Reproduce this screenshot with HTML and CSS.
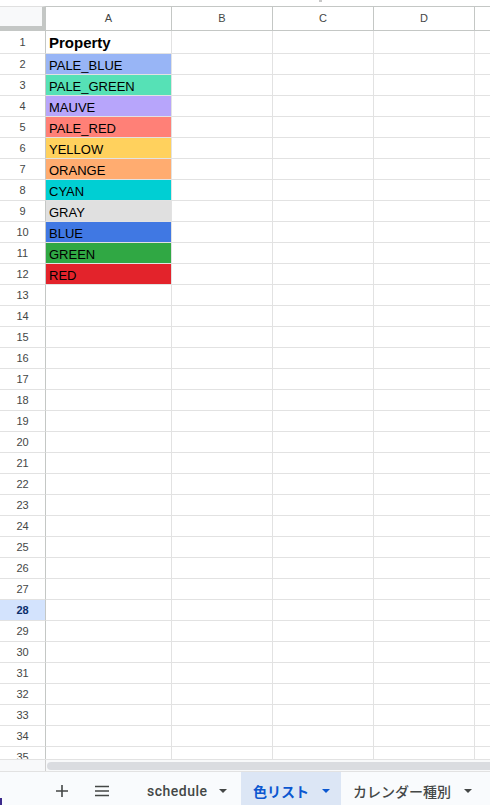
FILE: index.html
```html
<!DOCTYPE html>
<html lang="ja">
<head>
<meta charset="utf-8">
<title>色リスト</title>
<link rel="stylesheet" href="styles.css">
</head>
<body>
<div class="sheet">
  <div class="topstrip"><span class="speck"></span></div>
  <div class="grid">
    <div class="row head">
      <div class="corner"></div>
      <div class="ch ca">A</div><div class="ch">B</div><div class="ch">C</div><div class="ch">D</div><div class="ch"></div>
    </div>
    <div class="row r1"><div class="rh">1</div><div class="c ca prop">Property</div><div class="c"></div><div class="c"></div><div class="c"></div><div class="c"></div></div>
    <div class="row"><div class="rh">2</div><div class="c ca pale-blue">PALE_BLUE</div><div class="c"></div><div class="c"></div><div class="c"></div><div class="c"></div></div>
    <div class="row"><div class="rh">3</div><div class="c ca pale-green">PALE_GREEN</div><div class="c"></div><div class="c"></div><div class="c"></div><div class="c"></div></div>
    <div class="row"><div class="rh">4</div><div class="c ca mauve">MAUVE</div><div class="c"></div><div class="c"></div><div class="c"></div><div class="c"></div></div>
    <div class="row"><div class="rh">5</div><div class="c ca pale-red">PALE_RED</div><div class="c"></div><div class="c"></div><div class="c"></div><div class="c"></div></div>
    <div class="row"><div class="rh">6</div><div class="c ca yellow">YELLOW</div><div class="c"></div><div class="c"></div><div class="c"></div><div class="c"></div></div>
    <div class="row"><div class="rh">7</div><div class="c ca orange">ORANGE</div><div class="c"></div><div class="c"></div><div class="c"></div><div class="c"></div></div>
    <div class="row"><div class="rh">8</div><div class="c ca cyan">CYAN</div><div class="c"></div><div class="c"></div><div class="c"></div><div class="c"></div></div>
    <div class="row"><div class="rh">9</div><div class="c ca gray">GRAY</div><div class="c"></div><div class="c"></div><div class="c"></div><div class="c"></div></div>
    <div class="row"><div class="rh">10</div><div class="c ca blue">BLUE</div><div class="c"></div><div class="c"></div><div class="c"></div><div class="c"></div></div>
    <div class="row"><div class="rh">11</div><div class="c ca green">GREEN</div><div class="c"></div><div class="c"></div><div class="c"></div><div class="c"></div></div>
    <div class="row"><div class="rh">12</div><div class="c ca red">RED</div><div class="c"></div><div class="c"></div><div class="c"></div><div class="c"></div></div>
    <div class="row"><div class="rh">13</div><div class="c ca"></div><div class="c"></div><div class="c"></div><div class="c"></div><div class="c"></div></div>
    <div class="row"><div class="rh">14</div><div class="c ca"></div><div class="c"></div><div class="c"></div><div class="c"></div><div class="c"></div></div>
    <div class="row"><div class="rh">15</div><div class="c ca"></div><div class="c"></div><div class="c"></div><div class="c"></div><div class="c"></div></div>
    <div class="row"><div class="rh">16</div><div class="c ca"></div><div class="c"></div><div class="c"></div><div class="c"></div><div class="c"></div></div>
    <div class="row"><div class="rh">17</div><div class="c ca"></div><div class="c"></div><div class="c"></div><div class="c"></div><div class="c"></div></div>
    <div class="row"><div class="rh">18</div><div class="c ca"></div><div class="c"></div><div class="c"></div><div class="c"></div><div class="c"></div></div>
    <div class="row"><div class="rh">19</div><div class="c ca"></div><div class="c"></div><div class="c"></div><div class="c"></div><div class="c"></div></div>
    <div class="row"><div class="rh">20</div><div class="c ca"></div><div class="c"></div><div class="c"></div><div class="c"></div><div class="c"></div></div>
    <div class="row"><div class="rh">21</div><div class="c ca"></div><div class="c"></div><div class="c"></div><div class="c"></div><div class="c"></div></div>
    <div class="row"><div class="rh">22</div><div class="c ca"></div><div class="c"></div><div class="c"></div><div class="c"></div><div class="c"></div></div>
    <div class="row"><div class="rh">23</div><div class="c ca"></div><div class="c"></div><div class="c"></div><div class="c"></div><div class="c"></div></div>
    <div class="row"><div class="rh">24</div><div class="c ca"></div><div class="c"></div><div class="c"></div><div class="c"></div><div class="c"></div></div>
    <div class="row"><div class="rh">25</div><div class="c ca"></div><div class="c"></div><div class="c"></div><div class="c"></div><div class="c"></div></div>
    <div class="row"><div class="rh">26</div><div class="c ca"></div><div class="c"></div><div class="c"></div><div class="c"></div><div class="c"></div></div>
    <div class="row"><div class="rh">27</div><div class="c ca"></div><div class="c"></div><div class="c"></div><div class="c"></div><div class="c"></div></div>
    <div class="row"><div class="rh sel">28</div><div class="c ca"></div><div class="c"></div><div class="c"></div><div class="c"></div><div class="c"></div></div>
    <div class="row"><div class="rh">29</div><div class="c ca"></div><div class="c"></div><div class="c"></div><div class="c"></div><div class="c"></div></div>
    <div class="row"><div class="rh">30</div><div class="c ca"></div><div class="c"></div><div class="c"></div><div class="c"></div><div class="c"></div></div>
    <div class="row"><div class="rh">31</div><div class="c ca"></div><div class="c"></div><div class="c"></div><div class="c"></div><div class="c"></div></div>
    <div class="row"><div class="rh">32</div><div class="c ca"></div><div class="c"></div><div class="c"></div><div class="c"></div><div class="c"></div></div>
    <div class="row"><div class="rh">33</div><div class="c ca"></div><div class="c"></div><div class="c"></div><div class="c"></div><div class="c"></div></div>
    <div class="row"><div class="rh">34</div><div class="c ca"></div><div class="c"></div><div class="c"></div><div class="c"></div><div class="c"></div></div>
    <div class="row"><div class="rh">35</div><div class="c ca"></div><div class="c"></div><div class="c"></div><div class="c"></div><div class="c"></div></div>
  </div>
  <div class="hscroll"><div class="hs-left"></div><div class="hs-track"><div class="thumb"></div></div></div>
  <div class="tabs">
    <span class="edge"></span>
    <div class="tb-btn" title="シートを追加">
      <svg width="14" height="14" viewBox="0 0 14 14"><path d="M7 1v12M1 7h12" stroke="#444746" stroke-width="1.6" fill="none"/></svg>
    </div>
    <div class="tb-btn" title="すべてのシート">
      <svg width="16" height="14" viewBox="0 0 16 14"><path d="M1 2.5h14M1 7h14M1 11.5h14" stroke="#444746" stroke-width="1.5" fill="none"/></svg>
    </div>
    <div class="tab t-schedule"><span class="tab-label">schedule</span><span class="caret"></span></div>
    <div class="tab active"><span class="tab-label">色リスト</span><span class="caret"></span></div>
    <div class="tab"><span class="tab-label">カレンダー種別</span><span class="caret"></span></div>
  </div>
</div>
</body>
</html>
```
FILE: styles.css
```css
html, body {
  margin: 0;
  padding: 0;
  background: #ffffff;
}
body {
  width: 490px;
  height: 805px;
  overflow: hidden;
  font-family: "Liberation Sans", Arial, sans-serif;
}
.sheet {
  display: flex;
  flex-direction: column;
  width: 490px;
  height: 805px;
  overflow: hidden;
}
.topstrip {
  height: 6px;
  flex-shrink: 0;
  display: flex;
  background: #ffffff;
}
.speck {
  width: 3px;
  height: 2px;
  margin-left: 319px;
  background: #c8c8c8;
}
.grid {
  height: 753px;
  flex-shrink: 0;
  overflow: hidden;
}
.row {
  display: flex;
  height: 21px;
  width: 600px;
}
.row.r1 { height: 23px; }
.row.head { height: 25px; }

.rh, .c, .ch, .corner {
  flex-shrink: 0;
  box-sizing: border-box;
  width: 101px;
  height: 100%;
  border-right: 1px solid #e2e2e2;
  border-bottom: 1px solid #e2e2e2;
}
.rh, .corner { width: 46px; }
.ca { width: 126px; }

.corner {
  background: #f8f9fa;
  border-top: 1px solid #e0e0e0;
  border-right: 4px solid #c4c7c5;
  border-bottom: 5px solid #c4c7c5;
}
.ch {
  border-top: 1px solid #c4c7c5;
  border-right: 1px solid #c4c7c5;
  border-bottom: 1px solid #c4c7c5;
  text-align: center;
  font-size: 11px;
  line-height: 23px;
  color: #444746;
}
.rh {
  border-right: 1px solid #c4c7c5;
  border-bottom: 1px solid #e2e2e2;
  text-align: center;
  font-size: 11px;
  line-height: 20px;
  color: #444746;
}
.row.r1 .rh { line-height: 22px; }
.rh.sel {
  background: #d3e3fd;
  color: #0b2f6b;
  font-weight: bold;
}
.c {
  padding: 2px 3px 0;
  font-size: 13px;
  line-height: 20px;
  color: #000000;
  white-space: nowrap;
  overflow: hidden;
}
.c.prop {
  font-weight: bold;
  font-size: 15px;
  padding-top: 2px;
}
.pale-blue  { background: #98b5f6; }
.pale-green { background: #56e1b6; }
.mauve      { background: #b7a5fb; }
.pale-red   { background: #ff8077; }
.yellow     { background: #ffd15d; }
.orange     { background: #ffac70; }
.cyan       { background: #00cfd3; }
.gray       { background: #e0e0e0; }
.blue       { background: #4078e3; }
.green      { background: #30a844; }
.red        { background: #e3232b; }

.hscroll {
  flex-shrink: 0;
  height: 13px;
  box-sizing: border-box;
  display: flex;
  border-top: 1px solid #e2e2e2;
  border-bottom: 1px solid #e2e2e2;
  background: #f8f9fa;
}
.hs-left {
  width: 46px;
  flex-shrink: 0;
  box-sizing: border-box;
  border-right: 1px solid #d0d0d0;
}
.hs-track {
  flex: 1;
  display: flex;
  align-items: center;
  padding-left: 1px;
}
.thumb {
  flex: 1;
  height: 8px;
  background: #dadce0;
  border-radius: 4px 0 0 4px;
}

.tabs {
  flex-shrink: 0;
  height: 33px;
  display: flex;
  align-items: stretch;
  background: #f9fbfd;
  font-family: Roboto, "Noto Sans CJK JP", sans-serif;
}
.edge {
  align-self: flex-end;
  width: 2px;
  height: 7px;
  margin-right: 40px;
  background: #3c2a8c;
  flex-shrink: 0;
}
.tb-btn {
  width: 40px;
  box-sizing: border-box;
  padding-top: 4px;
  display: flex;
  align-items: center;
  justify-content: center;
  flex-shrink: 0;
}
.tab {
  box-sizing: border-box;
  display: flex;
  align-items: center;
  gap: 13px;
  padding: 4px 12px 0;
  flex-shrink: 0;
  font-size: 14px;
  font-weight: 500;
  color: #444746;
  white-space: nowrap;
}
.t-schedule {
  margin-left: 13px;
  width: 106px;
  letter-spacing: 0.5px;
  gap: 11px;
}
.tab.active {
  width: 100px;
  background: #dce6f5;
  color: #0b57d0;
  font-weight: 700;
}
.caret {
  width: 0;
  height: 0;
  border-left: 4px solid transparent;
  border-right: 4px solid transparent;
  border-top: 4px solid #444746;
}
.tab.active .caret { border-top-color: #0b57d0; }
```
